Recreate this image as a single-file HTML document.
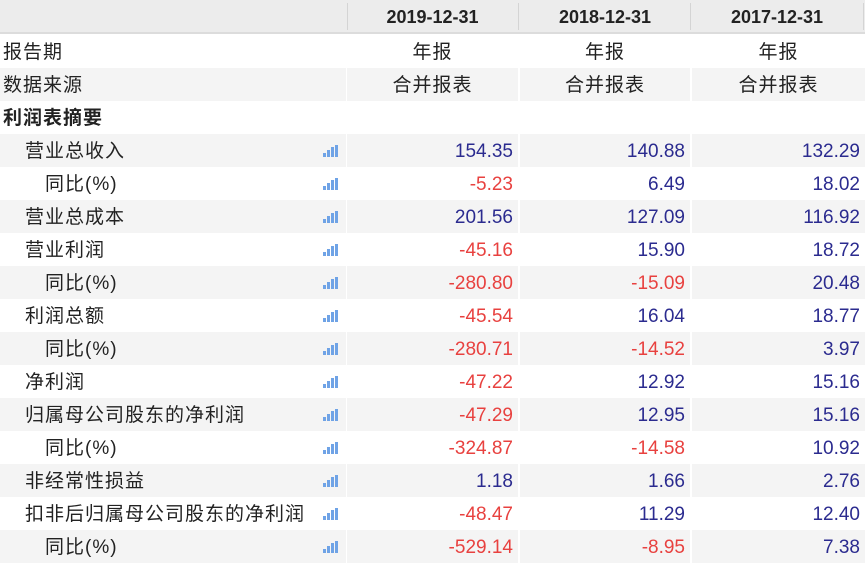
<!DOCTYPE html>
<html><head><meta charset="utf-8"><style>
*{margin:0;padding:0;box-sizing:border-box}
body{width:865px;height:565px;overflow:hidden;background:#fff;font-family:"Liberation Sans","Noto Sans CJK SC",sans-serif;font-size:19px;color:#222}
.hd{position:absolute;top:0;left:0;width:865px;height:34px;background:#ececec;border-bottom:2px solid #dcdcdc}
.hd div{position:absolute;top:0;height:32px;line-height:34px;text-align:center;font-weight:bold;font-size:18px;color:#222}
.hd .s{position:absolute;top:3px;width:1px;height:27px;background:#d4d4d4}
.r{position:absolute;left:0;width:865px;height:33px;line-height:35px}
.r>div{position:absolute;top:0;height:33px}
.g>div{background:#f4f4f4}
.l{left:0;width:346px;padding-left:3px;letter-spacing:1px}
.c1{left:347px;width:171px}.c2{left:520px;width:170px}.c3{left:692px;width:173px}
.n{text-align:right;padding-right:5px;color:#2b2b8f}
.red{color:#e8413f}
.ctr{text-align:center;padding:0;letter-spacing:1px}
.ic{position:absolute;left:323px;top:11px;width:16px;height:12px}
.ic i{position:absolute;bottom:0;width:3px;background:#6fa3e6}
</style></head><body>
<div class="hd">
<div style="left:347px;width:171px">2019-12-31</div>
<div style="left:520px;width:170px">2018-12-31</div>
<div style="left:692px;width:170px">2017-12-31</div>
<span class="s" style="left:347px"></span><span class="s" style="left:518px"></span><span class="s" style="left:690px"></span><span class="s" style="left:863px"></span>
</div>

<div class="r" style="top:35px"><div class="l">报告期</div><div class="c1 ctr">年报</div><div class="c2 ctr">年报</div><div class="c3 ctr">年报</div></div>
<div class="r g" style="top:68px"><div class="l">数据来源</div><div class="c1 ctr">合并报表</div><div class="c2 ctr">合并报表</div><div class="c3 ctr">合并报表</div></div>
<div class="r" style="top:101px"><div class="l" style="font-weight:bold">利润表摘要</div></div>

<div id="rows"></div>
<script>
var d=[["营业总收入",1,"154.35","140.88","132.29"],["同比(%)",2,"-5.23","6.49","18.02"],["营业总成本",1,"201.56","127.09","116.92"],["营业利润",1,"-45.16","15.90","18.72"],["同比(%)",2,"-280.80","-15.09","20.48"],["利润总额",1,"-45.54","16.04","18.77"],["同比(%)",2,"-280.71","-14.52","3.97"],["净利润",1,"-47.22","12.92","15.16"],["归属母公司股东的净利润",1,"-47.29","12.95","15.16"],["同比(%)",2,"-324.87","-14.58","10.92"],["非经常性损益",1,"1.18","1.66","2.76"],["扣非后归属母公司股东的净利润",1,"-48.47","11.29","12.40"],["同比(%)",2,"-529.14","-8.95","7.38"]];
var h="";
d.forEach(function(r,i){
 var t=134+i*33;
 var cls=i%2==0?"r g":"r";
 var pad=r[1]==1?25:45;
 h+='<div class="'+cls+'" style="top:'+t+'px"><div class="l" style="padding-left:'+pad+'px">'+r[0]+'<span class="ic"><i style="left:0;height:4px"></i><i style="left:4px;height:7px"></i><i style="left:8px;height:10px"></i><i style="left:12px;height:12px"></i></span></div>';
 ["c1","c2","c3"].forEach(function(c,j){var v=r[2+j];h+='<div class="'+c+' n'+(v[0]=="-"?" red":"")+'">'+v+'</div>';});
 h+='</div>';
});
document.getElementById("rows").innerHTML=h;
</script>
</body></html>
